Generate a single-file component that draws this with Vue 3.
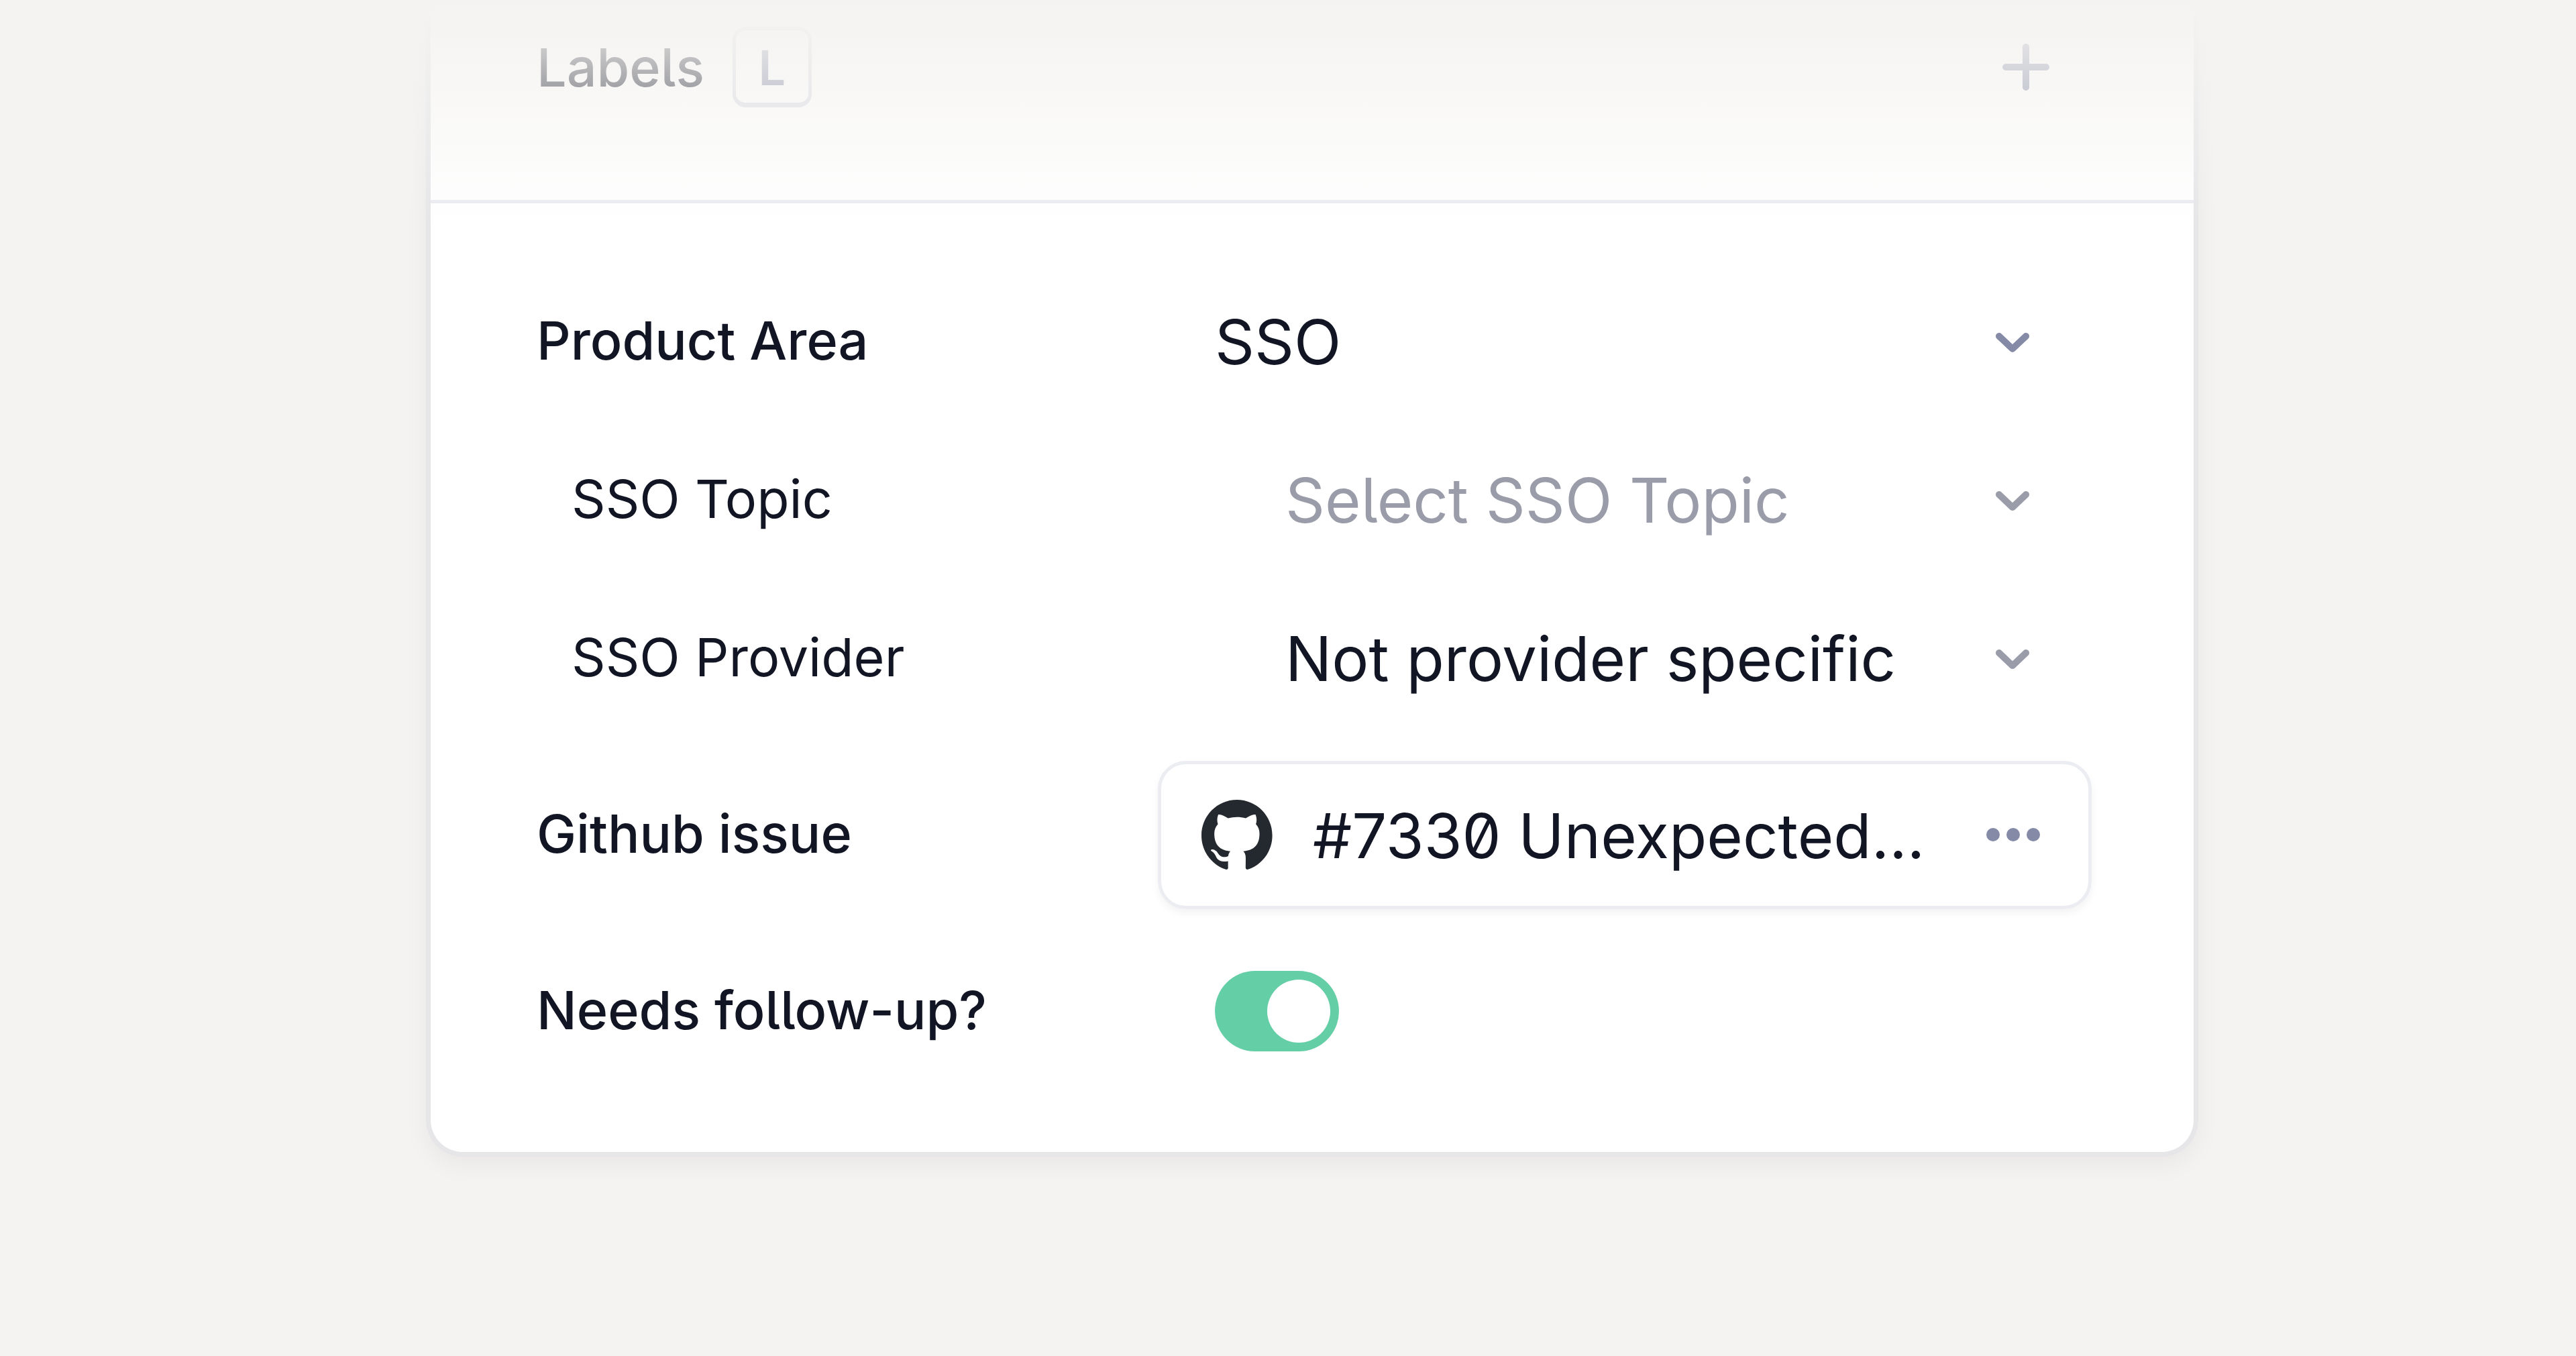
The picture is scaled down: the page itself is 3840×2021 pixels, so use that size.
<script setup>
import { ref } from 'vue'

// dropdown fields
const fields = ref([
  {
    id: 'product-area',
    label: 'Product Area',
    value: 'SSO',
    options: ['SSO'],
    nested: false
  },
  {
    id: 'sso-topic',
    label: 'SSO Topic',
    value: '',
    placeholder: 'Select SSO Topic',
    options: [],
    nested: true
  },
  {
    id: 'sso-provider',
    label: 'SSO Provider',
    value: 'Not provider specific',
    options: ['Not provider specific'],
    nested: true
  }
])

const needsFollowUp = ref(true)
</script>

<template>
  <div class="page">
    <main class="panel">
      <header class="panel-header">
        <h2 class="label">Labels</h2>
        <kbd class="key">L</kbd>
        <button class="icon-btn add" type="button" aria-label="Add label">
          <svg width="70" height="70" viewBox="0 0 70 70" fill="none">
            <path d="M35 5v60M5 35h60" stroke="currentColor" stroke-width="10" stroke-linecap="round" />
          </svg>
        </button>
      </header>

      <form class="panel-body" @submit.prevent>
        <div class="group">
          <div
            v-for="field in fields"
            :key="field.id"
            class="row"
            :class="{ nested: field.nested }"
          >
            <label class="label" :for="field.id">{{ field.label }}</label>
            <div class="select-wrap">
              <select
                :id="field.id"
                v-model="field.value"
                class="select"
                :class="{ empty: !field.value }"
              >
                <option v-if="field.placeholder" value="">{{ field.placeholder }}</option>
                <option v-for="opt in field.options" :key="opt" :value="opt">{{ opt }}</option>
              </select>
              <svg class="chevron" width="52" height="32" viewBox="0 0 52 32" fill="none">
                <path
                  d="M6 7l20 19L46 7"
                  stroke="currentColor"
                  stroke-width="10"
                  stroke-linecap="round"
                  stroke-linejoin="round"
                />
              </svg>
            </div>
          </div>
        </div>

        <div class="row">
          <span class="label">Github issue</span>
          <div class="issue">
            <svg class="github" width="106" height="106" viewBox="0 0 98 96">
              <path
                fill="currentColor"
                d="M48.854 0C21.839 0 0 22 0 49.217c0 21.756 13.993 40.172 33.405 46.69 2.427.49 3.316-1.059 3.316-2.362 0-1.141-.08-5.052-.08-9.127-13.59 2.934-16.42-5.867-16.42-5.867-2.184-5.704-5.42-7.17-5.42-7.17-4.448-3.015.324-3.015.324-3.015 4.934.326 7.523 5.052 7.523 5.052 4.367 7.496 11.404 5.378 14.235 4.074.404-3.178 1.699-5.378 3.074-6.6-10.839-1.141-22.243-5.378-22.243-24.283 0-5.378 1.94-9.778 5.014-13.2-.485-1.222-2.184-6.275.486-13.038 0 0 4.125-1.304 13.426 5.052a46.97 46.97 0 0 1 12.214-1.63c4.125 0 8.33.571 12.213 1.63 9.302-6.356 13.427-5.052 13.427-5.052 2.67 6.763.97 11.816.485 13.038 3.155 3.422 5.015 7.822 5.015 13.2 0 18.905-11.404 23.06-22.324 24.283 1.78 1.548 3.316 4.481 3.316 9.126 0 6.6-.08 11.897-.08 13.526 0 1.304.89 2.853 3.316 2.364 19.412-6.52 33.405-24.935 33.405-46.691C97.707 22 75.788 0 48.854 0z"
              />
            </svg>
            <a class="issue-link" href="#">#7330 Unexpected…</a>
            <button class="icon-btn" type="button" aria-label="More actions">
              <svg width="80" height="20" viewBox="0 0 80 20" fill="currentColor">
                <circle cx="10" cy="10" r="10" />
                <circle cx="40" cy="10" r="10" />
                <circle cx="70" cy="10" r="10" />
              </svg>
            </button>
          </div>
        </div>

        <div class="row">
          <label class="label" for="follow-up">Needs follow-up?</label>
          <input id="follow-up" v-model="needsFollowUp" class="toggle" type="checkbox" role="switch" />
        </div>
      </form>
    </main>
    <div class="fade"></div>
  </div>
</template>

<style>
body {
  margin: 0;
  background: #f4f3f1;
}
</style>

<style scoped>
.page {
  position: relative;
  display: grid;
  grid-template-columns: 642fr 2628fr 570fr;
  align-items: start;
  min-height: 100vh;
  overflow: hidden;
  background: #f4f3f1;
  color: #121624;
  font-family: Inter, "Liberation Sans", sans-serif;
  font-optical-sizing: none;
  font-feature-settings: "cv05", "zero";
}

.panel {
  grid-column: 2;
  min-width: 0;
  background: #fff;
  border-radius: 0 0 48px 48px;
  box-shadow: 0 0 0 7px #e6e6e9, 0 12px 36px 7px rgba(40, 20, 40, 0.05);
}

.panel-header {
  display: flex;
  align-items: center;
  gap: 42px;
  padding: 40px 215px 138px 158px;
  border-bottom: 5px solid #eaebf1;
}

.label {
  margin: 0;
  font-size: 79px;
  font-weight: 500;
  line-height: 96px;
}

.key {
  box-sizing: border-box;
  width: 118px;
  height: 120px;
  border: 5px solid #dcdde6;
  border-bottom-width: 7px;
  border-radius: 20px;
  color: #858ba6;
  font-family: inherit;
  font-size: 72px;
  font-weight: 600;
  line-height: 112px;
  text-align: center;
}

.icon-btn {
  display: flex;
  padding: 0;
  border: 0;
  background: none;
  color: #858ba6;
  cursor: pointer;
}

.add {
  margin-left: auto;
}

.panel-body {
  display: flex;
  flex-direction: column;
  gap: 27px;
  padding: 88px 152px 92px 158px;
}

.row {
  display: grid;
  grid-template-columns: 926fr 1392fr;
  align-items: center;
  height: 236px;
}

.row .label {
  padding-bottom: 4px;
}

.nested .label {
  padding-left: 52px;
  font-weight: 400;
}

.select-wrap {
  position: relative;
}

.select {
  appearance: none;
  width: 100%;
  height: 220px;
  padding: 0 160px 0 85px;
  border: 0;
  background: none;
  color: inherit;
  font: inherit;
  font-size: 92px;
  cursor: pointer;
}

.nested .select {
  padding-left: 190px;
}

.select.empty {
  color: #9a9ca9;
}

.chevron {
  position: absolute;
  top: 50%;
  right: 92px;
  margin-top: -15px;
  color: #858ba6;
  pointer-events: none;
}

.nested .chevron {
  color: #9a9ca9;
}

.issue {
  box-sizing: border-box;
  display: flex;
  align-items: center;
  height: 221px;
  min-width: 0;
  padding: 0 72px 0 60px;
  border: 5px solid #ecedf2;
  border-radius: 42px;
  box-shadow: 0 6px 12px rgba(18, 22, 36, 0.05);
}

.github {
  flex: none;
  color: #24292f;
}

.issue-link {
  flex: 1;
  min-width: 0;
  margin: 0 24px 0 60px;
  padding-top: 4px;
  overflow: hidden;
  color: inherit;
  font-size: 92px;
  line-height: 120px;
  text-decoration: none;
  white-space: nowrap;
}

.toggle {
  appearance: none;
  box-sizing: border-box;
  display: flex;
  width: 185px;
  height: 120px;
  margin: 0 0 0 85px;
  padding: 13px;
  border-radius: 60px;
  background: #c9cbd6;
  cursor: pointer;
}

.toggle::before {
  content: "";
  width: 94px;
  height: 94px;
  border-radius: 50%;
  background: #fff;
}

.toggle:checked {
  justify-content: flex-end;
  background: #64cea6;
}

/* the panel fades out towards the top edge */
.fade {
  position: absolute;
  top: 0;
  left: 0;
  right: 0;
  height: 340px;
  background: linear-gradient(#f4f3f1 3%, rgba(244, 243, 241, 0));
  pointer-events: none;
}
</style>
